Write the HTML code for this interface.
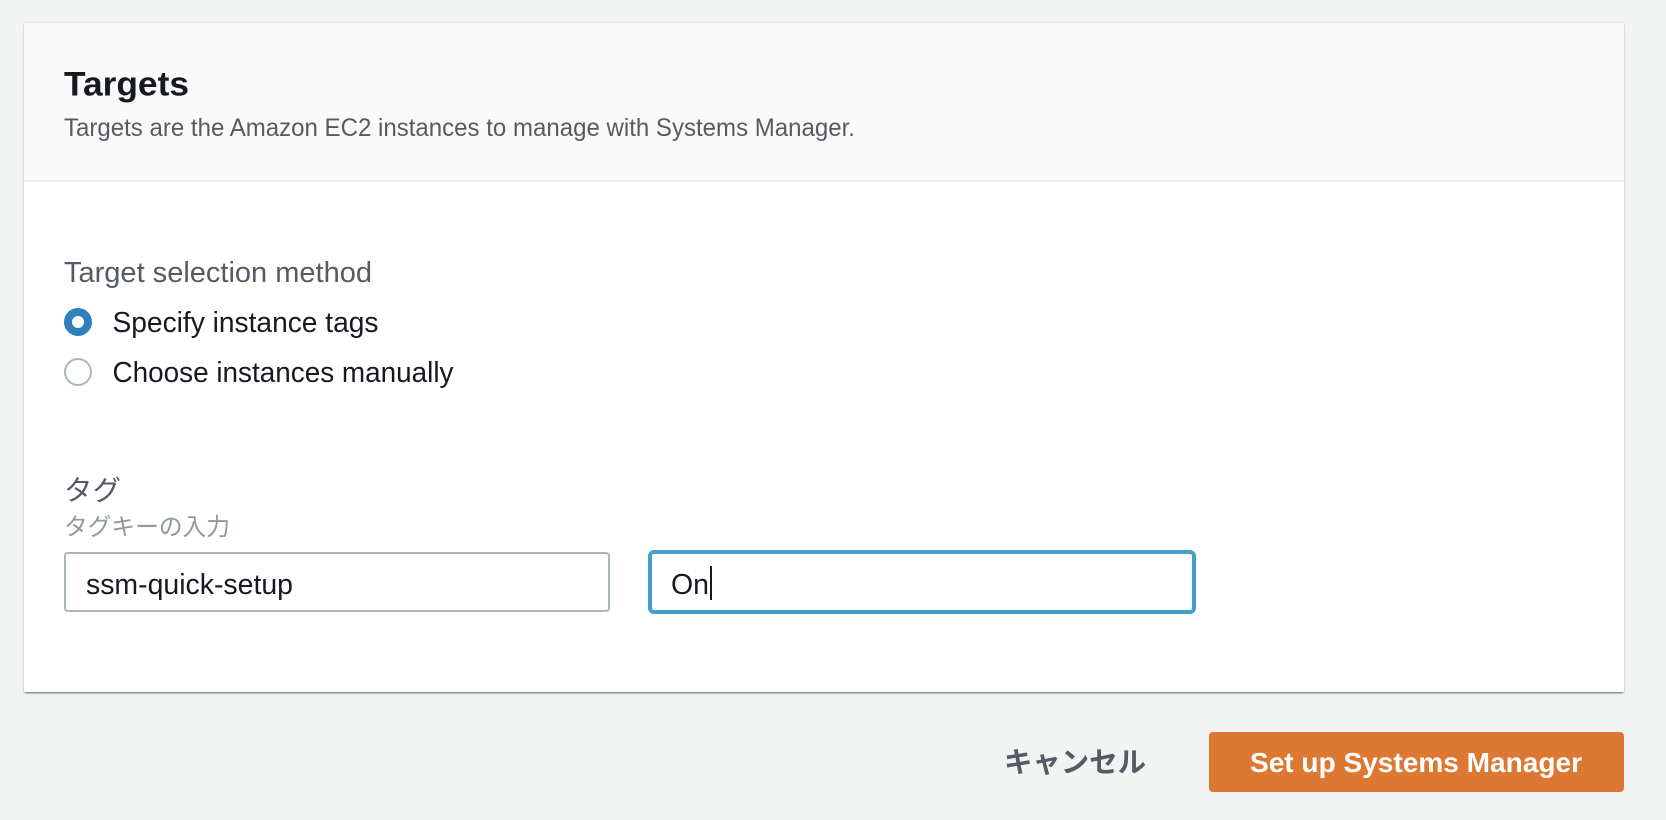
<!DOCTYPE html>
<html lang="en">
<head>
<meta charset="utf-8">
<title>Targets</title>
<style>
html,body{margin:0;padding:0;width:1666px;height:820px;overflow:hidden;background:#f2f3f3;}
.abs{position:absolute;box-sizing:border-box;}
#card{left:24px;top:23px;width:1600px;height:669px;background:#fff;box-shadow:0 2px 2px -1px rgba(0,28,36,.6),0 0 2px 0 rgba(0,28,36,.18);}
#head{left:24px;top:23px;width:1600px;height:159px;background:#fafafa;border-bottom:2px solid #eaeded;}
#r1{left:64px;top:308px;width:28px;height:28px;border-radius:50%;background:#fff;border:8px solid #3080bd;}
#r2{left:64px;top:358px;width:28px;height:28px;border-radius:50%;background:#fff;border:2px solid #aab7b8;}
#i1{left:64px;top:552px;width:546px;height:60px;background:#fff;border:2px solid #aab7b8;border-radius:4px;}
#i2{left:648px;top:550px;width:548px;height:64px;background:#fff;border:4px solid #44a0c8;border-radius:6px;}
#caret{left:710px;top:566px;width:2px;height:34px;background:#16191f;}
#btn{left:1209px;top:732px;width:415px;height:60px;background:#dd7833;border-radius:4px;}
svg{position:absolute;left:0;top:0;}
text{font-family:"Liberation Sans","Noto Sans CJK JP",sans-serif;}
</style>
</head>
<body>
<div class="abs" id="card"></div>
<div class="abs" id="head"></div>
<div class="abs" id="r1"></div>
<div class="abs" id="r2"></div>
<div class="abs" id="i1"></div>
<div class="abs" id="i2"></div>
<div class="abs" id="caret"></div>
<div class="abs" id="btn"></div>
<svg width="1666" height="820" viewBox="0 0 1666 820">
<text x="64" y="95.5" font-size="34" font-weight="700" fill="#16191f" textLength="125" lengthAdjust="spacingAndGlyphs">Targets</text>
<text x="64" y="136" font-size="25" fill="#545b64" textLength="791" lengthAdjust="spacingAndGlyphs">Targets are the Amazon EC2 instances to manage with Systems Manager.</text>
<text x="64" y="282" font-size="28.5" fill="#545b64" textLength="308" lengthAdjust="spacingAndGlyphs">Target selection method</text>
<text x="112.5" y="332" font-size="28.5" fill="#16191f" textLength="266" lengthAdjust="spacingAndGlyphs">Specify instance tags</text>
<text x="112.5" y="382" font-size="28.5" fill="#16191f" textLength="341" lengthAdjust="spacingAndGlyphs">Choose instances manually</text>
<text x="64" y="500" font-size="28" fill="#545b64" textLength="57" lengthAdjust="spacingAndGlyphs">タグ</text>
<text x="64" y="535" font-size="23.7" fill="#8d9b9c" textLength="166" lengthAdjust="spacingAndGlyphs">タグキーの入力</text>
<text x="86" y="594" font-size="28.5" fill="#16191f" textLength="207" lengthAdjust="spacingAndGlyphs">ssm-quick-setup</text>
<text x="671" y="594" font-size="28.5" fill="#16191f" textLength="38" lengthAdjust="spacingAndGlyphs">On</text>
<text x="1004" y="772" font-size="28.5" font-weight="700" fill="#545b64" textLength="142" lengthAdjust="spacingAndGlyphs">キャンセル</text>
<text x="1250" y="772" font-size="27.5" font-weight="700" fill="#ffffff" textLength="332" lengthAdjust="spacingAndGlyphs">Set up Systems Manager</text>
</svg>
</body>
</html>
